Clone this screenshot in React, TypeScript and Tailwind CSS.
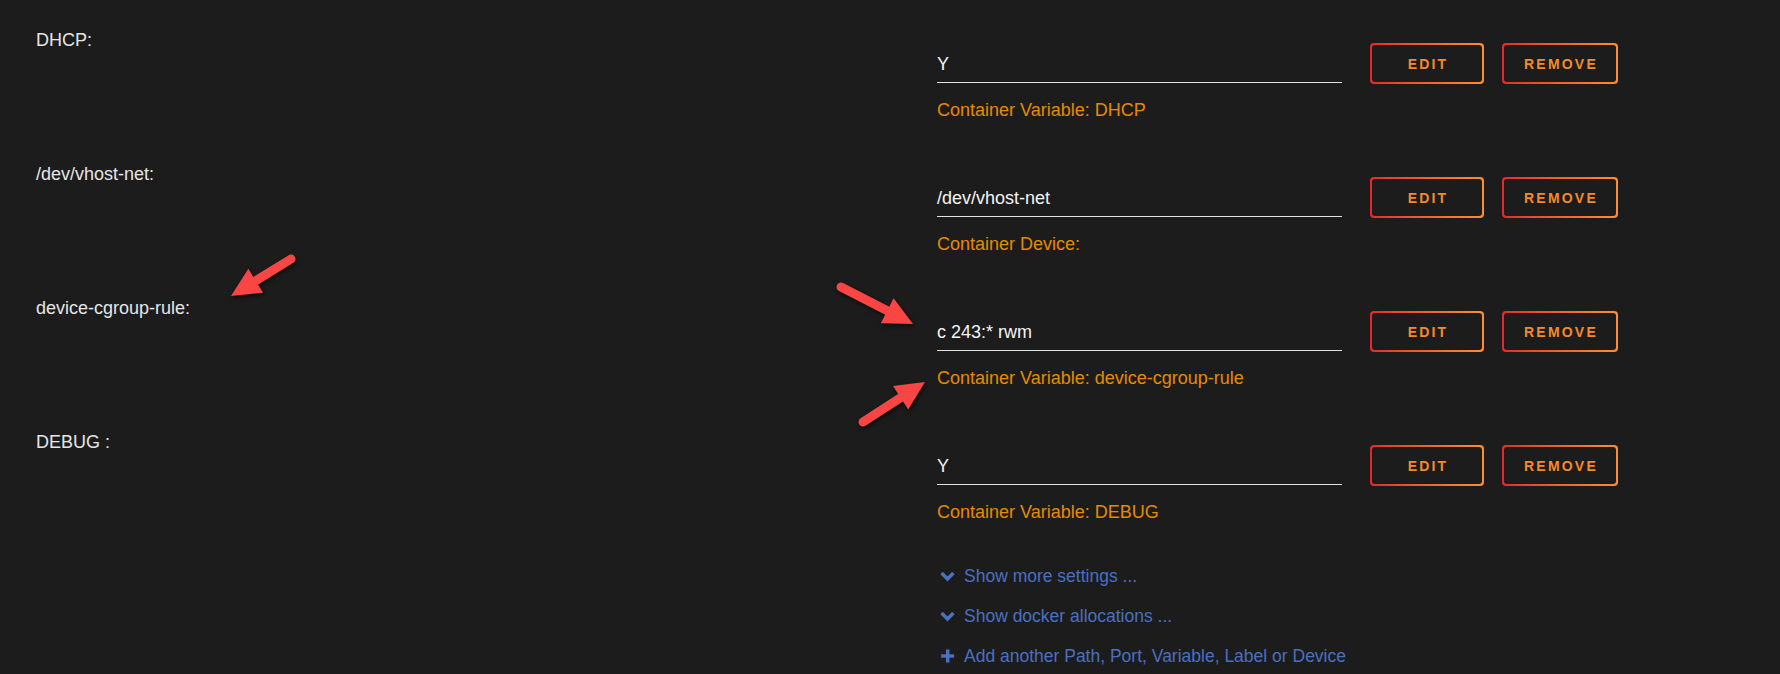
import React from 'react';

type Row = { label: string; value: string; help: string };

const rows: Row[] = [
  { label: 'DHCP:', value: 'Y', help: 'Container Variable: DHCP' },
  { label: '/dev/vhost-net:', value: '/dev/vhost-net', help: 'Container Device:' },
  { label: 'device-cgroup-rule:', value: 'c 243:* rwm', help: 'Container Variable: device-cgroup-rule' },
  { label: 'DEBUG :', value: 'Y', help: 'Container Variable: DEBUG' },
];

function OutlineButton({ children, wide }: { children: React.ReactNode; wide?: boolean }) {
  return (
    <div className={`rounded-[4px] bg-gradient-to-r from-[#e3282c] to-[#ff8e2e] p-[2px] ${wide ? 'w-[116px]' : 'w-[114px]'} h-[41px]`}>
      <div className="flex h-full w-full items-center justify-center rounded-[3px] bg-[#1c1c1c] pl-[2px] text-[14px] font-bold leading-none tracking-[2.2px] text-[#f58a2c]">
        {children}
      </div>
    </div>
  );
}

function Chevron() {
  return (
    <svg width="15" height="11" viewBox="0 0 15 11" className="shrink-0">
      <polyline points="1.6,2 7.5,8 13.4,2" fill="none" stroke="#4a70c2" strokeWidth="3.4" strokeLinejoin="miter" />
    </svg>
  );
}

function Plus() {
  return (
    <svg width="15" height="14" viewBox="0 0 15 14" className="shrink-0">
      <rect x="6" y="0.5" width="3.4" height="13" fill="#4a70c2" />
      <rect x="1.2" y="5.3" width="13" height="3.4" fill="#4a70c2" />
    </svg>
  );
}

// annotation arrow drawn from tail to tip
function Arrow({ tail, tip }: { tail: [number, number]; tip: [number, number] }) {
  const dx = tip[0] - tail[0];
  const dy = tip[1] - tail[1];
  const len = Math.hypot(dx, dy);
  const ux = dx / len;
  const uy = dy / len;
  const headLen = 29;
  const half = 14;
  const bx = tip[0] - ux * headLen;
  const by = tip[1] - uy * headLen;
  const w1 = [bx - uy * half, by + ux * half];
  const w2 = [bx + uy * half, by - ux * half];
  return (
    <g>
      <line x1={tail[0]} y1={tail[1]} x2={bx + ux * 4} y2={by + uy * 4} stroke="#fa4545" strokeWidth="9" strokeLinecap="round" />
      <polygon points={`${tip[0]},${tip[1]} ${w1[0]},${w1[1]} ${w2[0]},${w2[1]}`} fill="#fa4545" />
    </g>
  );
}

export default function App() {
  return (
    <div className="relative min-h-screen overflow-hidden bg-[#1c1c1c] font-['Liberation_Sans',Arial,sans-serif] text-[18px] leading-[24px]">
      <div className="pl-[36px] pt-[28px]">
        {rows.map((row) => (
          <div key={row.label} className="flex h-[134px]">
            <div className="w-[901px] shrink-0 text-[#e6e6e6]">{row.label}</div>
            <div className="pt-[15px]">
              <div className="flex items-start">
                <div className="flex h-[40px] w-[405px] items-center border-b border-[#e2e2e2] pt-[2px] text-[#f4f4f4]">
                  {row.value}
                </div>
                <div className="ml-[28px] flex gap-[18px]">
                  <OutlineButton>EDIT</OutlineButton>
                  <OutlineButton wide>REMOVE</OutlineButton>
                </div>
              </div>
              <div className="mt-[14px] text-[#e68a00]">{row.help}</div>
            </div>
          </div>
        ))}
        <div className="ml-[901px] flex flex-col gap-4 text-[17.5px] text-[#4a70c2]">
          <div className="flex items-center gap-[9px] pl-[3px]">
            <Chevron />
            <span>Show more settings ...</span>
          </div>
          <div className="flex items-center gap-[9px] pl-[3px]">
            <Chevron />
            <span>Show docker allocations ...</span>
          </div>
          <div className="flex items-center gap-[9px] pl-[3px]">
            <Plus />
            <span>Add another Path, Port, Variable, Label or Device</span>
          </div>
        </div>
      </div>

      {/* red annotation arrows */}
      <svg
        className="pointer-events-none absolute left-0 top-0 drop-shadow-[1px_2px_2px_rgba(0,0,0,0.6)]"
        width="1780"
        height="674"
      >
        <Arrow tail={[291, 259]} tip={[231, 296]} />
        <Arrow tail={[841, 287]} tip={[913, 324]} />
        <Arrow tail={[863, 422]} tip={[925, 382]} />
      </svg>
    </div>
  );
}
